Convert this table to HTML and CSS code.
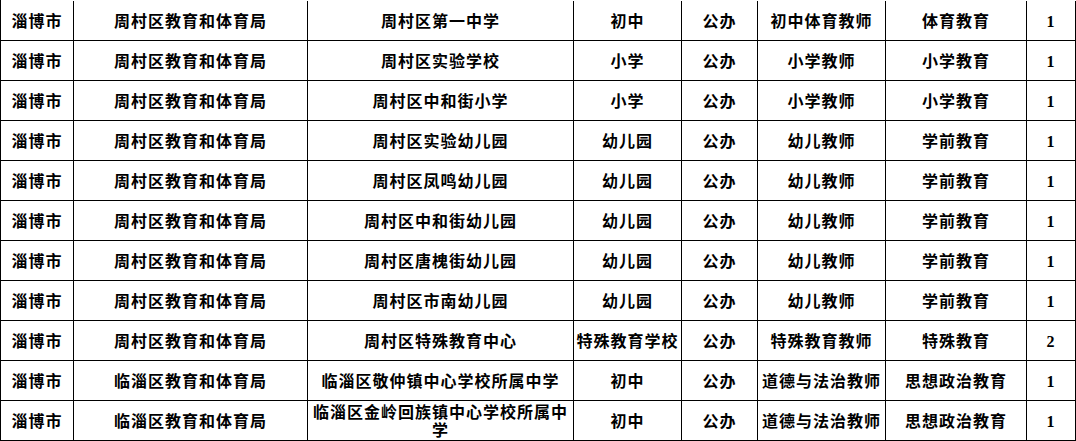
FILE: index.html
```html
<!DOCTYPE html>
<html lang="zh-CN">
<head>
<meta charset="utf-8">
<title>岗位表</title>
<link rel="stylesheet" href="styles.css">
</head>
<body>
<div class="sheet">
  <div class="c">淄博市</div><div class="c">周村区教育和体育局</div><div class="c">周村区第一中学</div><div class="c">初中</div><div class="c">公办</div><div class="c">初中体育教师</div><div class="c">体育教育</div><div class="c">1</div>
  <div class="c">淄博市</div><div class="c">周村区教育和体育局</div><div class="c">周村区实验学校</div><div class="c">小学</div><div class="c">公办</div><div class="c">小学教师</div><div class="c">小学教育</div><div class="c">1</div>
  <div class="c">淄博市</div><div class="c">周村区教育和体育局</div><div class="c">周村区中和街小学</div><div class="c">小学</div><div class="c">公办</div><div class="c">小学教师</div><div class="c">小学教育</div><div class="c">1</div>
  <div class="c">淄博市</div><div class="c">周村区教育和体育局</div><div class="c">周村区实验幼儿园</div><div class="c">幼儿园</div><div class="c">公办</div><div class="c">幼儿教师</div><div class="c">学前教育</div><div class="c">1</div>
  <div class="c">淄博市</div><div class="c">周村区教育和体育局</div><div class="c">周村区凤鸣幼儿园</div><div class="c">幼儿园</div><div class="c">公办</div><div class="c">幼儿教师</div><div class="c">学前教育</div><div class="c">1</div>
  <div class="c">淄博市</div><div class="c">周村区教育和体育局</div><div class="c">周村区中和街幼儿园</div><div class="c">幼儿园</div><div class="c">公办</div><div class="c">幼儿教师</div><div class="c">学前教育</div><div class="c">1</div>
  <div class="c">淄博市</div><div class="c">周村区教育和体育局</div><div class="c">周村区唐槐街幼儿园</div><div class="c">幼儿园</div><div class="c">公办</div><div class="c">幼儿教师</div><div class="c">学前教育</div><div class="c">1</div>
  <div class="c">淄博市</div><div class="c">周村区教育和体育局</div><div class="c">周村区市南幼儿园</div><div class="c">幼儿园</div><div class="c">公办</div><div class="c">幼儿教师</div><div class="c">学前教育</div><div class="c">1</div>
  <div class="c">淄博市</div><div class="c">周村区教育和体育局</div><div class="c">周村区特殊教育中心</div><div class="c">特殊教育学校</div><div class="c">公办</div><div class="c">特殊教育教师</div><div class="c">特殊教育</div><div class="c">2</div>
  <div class="c">淄博市</div><div class="c">临淄区教育和体育局</div><div class="c">临淄区敬仲镇中心学校所属中学</div><div class="c">初中</div><div class="c">公办</div><div class="c">道德与法治教师</div><div class="c">思想政治教育</div><div class="c">1</div>
  <div class="c">淄博市</div><div class="c">临淄区教育和体育局</div><div class="c">临淄区金岭回族镇中心学校所属中学</div><div class="c">初中</div><div class="c">公办</div><div class="c">道德与法治教师</div><div class="c">思想政治教育</div><div class="c">1</div>
</div>
</body>
</html>
```
FILE: styles.css
```css
html, body {
  margin: 0;
  padding: 0;
  background: #ffffff;
}
.sheet {
  display: grid;
  grid-template-columns: 73px 234px 266px 108px 76px 128px 141px 49px;
  grid-auto-rows: 40px;
  width: 1076px;
  box-sizing: border-box;
  padding-top: 1px;
  border-left: 1px solid #000;
  font-family: "Liberation Serif", "Noto Sans CJK SC", serif;
  font-size: 16px;
  font-weight: 700;
  letter-spacing: 1px;
  line-height: 18px;
  color: #000;
}
.c {
  box-sizing: border-box;
  padding-top: 2px;
  border-right: 1px solid #000;
  border-bottom: 1px solid #000;
  display: flex;
  align-items: center;
  justify-content: center;
  text-align: center;
  overflow: hidden;
}
```
